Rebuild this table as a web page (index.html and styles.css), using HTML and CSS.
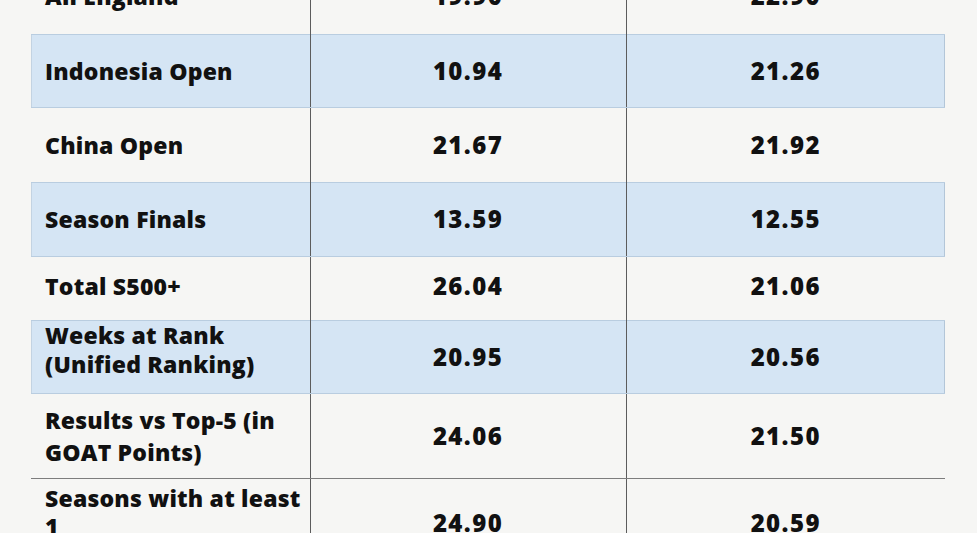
FILE: index.html
```html
<!DOCTYPE html>
<html lang="en">
<head>
<meta charset="utf-8">
<title>GOAT Points Comparison</title>
<link rel="stylesheet" href="styles.css">
</head>
<body>
<div class="page">
  <table class="stats">
    <colgroup>
      <col class="c-label">
      <col class="c-val">
      <col class="c-val2">
    </colgroup>
    <tbody>
      <tr class="r r0"><td class="label">All England</td><td class="num">19.90</td><td class="num">22.90</td></tr>
      <tr class="r r1 alt"><td class="label">Indonesia Open</td><td class="num">10.94</td><td class="num">21.26</td></tr>
      <tr class="r r2"><td class="label">China Open</td><td class="num">21.67</td><td class="num">21.92</td></tr>
      <tr class="r r3 alt"><td class="label">Season Finals</td><td class="num">13.59</td><td class="num">12.55</td></tr>
      <tr class="r r4"><td class="label">Total S500+</td><td class="num">26.04</td><td class="num">21.06</td></tr>
      <tr class="r r5 alt"><td class="label lift">Weeks at Rank<br>(Unified Ranking)</td><td class="num">20.95</td><td class="num">20.56</td></tr>
      <tr class="r r6"><td class="label">Results vs Top-5 (in<br>GOAT Points)</td><td class="num">24.06</td><td class="num">21.50</td></tr>
      <tr class="r r7"><td class="label top">Seasons with at least<br>1</td><td class="num">24.90</td><td class="num">20.59</td></tr>
    </tbody>
  </table>
</div>
</body>
</html>
```

FILE: styles.css
```css
html, body {
  margin: 0;
  padding: 0;
  background: #f6f6f4;
  overflow: hidden;
}

.page {
  width: 977px;
  height: 533px;
  overflow: hidden;
}

.stats {
  margin-top: -41px;
  margin-left: 31px;
  width: 914px;
  border-collapse: collapse;
  table-layout: fixed;
  font-family: "Open Sans", "Noto Sans", sans-serif;
  font-weight: 800;
  font-size: 23px;
  color: #111;
}

.c-label { width: 279px; }
.c-val { width: 316px; }
.c-val2 { width: 319px; }

.stats td {
  padding: 0 14px;
  text-align: center;
  vertical-align: middle;
  line-height: 32px;
  border-left: 1px solid #5c5c5c;
}

.stats td:first-child {
  border-left: none;
}

.stats td.label {
  text-align: left;
  padding-right: 4px;
  letter-spacing: 0.2px;
}

.stats td.num {
  font-size: 24px;
  letter-spacing: 1.4px;
}

.stats td.lift {
  vertical-align: top;
  line-height: 29px;
  padding-top: 0;
}

.stats td.top {
  vertical-align: top;
  padding-top: 5px;
  line-height: 28px;
}

.r0 { height: 75px; }
.r1 { height: 73px; }
.r2 { height: 75px; }
.r3 { height: 74px; }
.r4 { height: 64px; }
.r5 { height: 73px; }
.r6 { height: 85px; }
.r7 { height: 90px; }

.r4 td { padding-bottom: 4px; }

.alt td {
  background: #d5e5f4;
  border-top: 1px solid #b9cde0;
  border-bottom: 1px solid #b9cde0;
}

.alt td:first-child {
  box-shadow: inset 1px 0 0 #c3d3e2;
}

.alt td:last-child {
  box-shadow: inset -1px 0 0 #b3c6d8;
}

.r6 td {
  border-bottom: 1px solid #7d7d7d;
}
```
